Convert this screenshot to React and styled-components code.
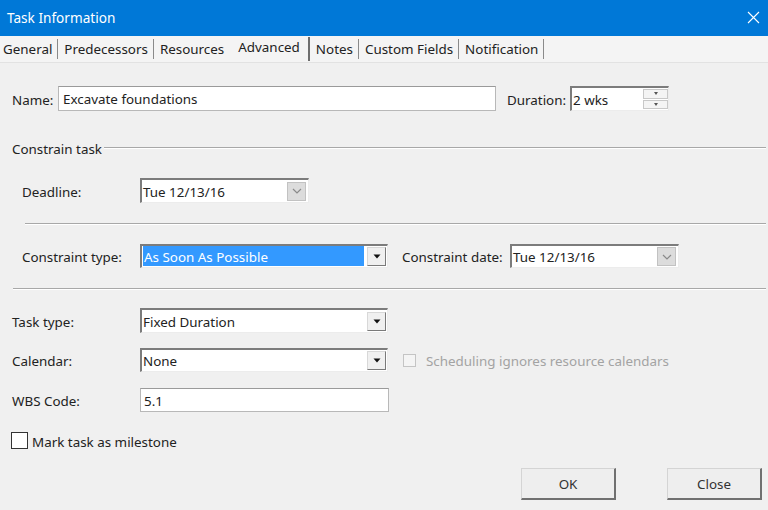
import styled, { createGlobalStyle } from "styled-components";

const GlobalStyle = createGlobalStyle`
    html, body {
        margin: 0;
        padding: 0;
        background: #f0f0f0;
    }
    body {
        font-family: "Noto Sans", "Open Sans", sans-serif;
        font-size: 13.4px;
        color: #222;
    }
`

const Window = styled.div`
    width: 768px;
    height: 510px;
    background: #f0f0f0;
    display: flex;
    flex-direction: column;
    overflow: hidden;
`

const TitleBar = styled.div`
    height: 36px;
    flex-shrink: 0;
    box-sizing: border-box;
    background: #0078d7;
    color: #fff;
    font-size: 13.6px;
    display: flex;
    align-items: center;
    justify-content: space-between;
    padding: 0 8px 2px 7px;
`

const TabStrip = styled.div`
    height: 27px;
    flex-shrink: 0;
    box-sizing: border-box;
    display: flex;
    align-items: center;
    background: #f4f4f4;
    border-bottom: 1px solid #e2e2e2;
`

const Tab = styled.div`
    height: 20px;
    line-height: 20px;
    padding: ${p => p.$active ? "0 8px 4px 6px" : "0 5px 0 6px"};
    margin-left: ${p => p.$active ? "3px" : "0"};
    border-right: ${p => p.$sep}px solid ${p => p.$sep > 1 ? "#6e6e6e" : "#8a8a8a"};
    white-space: nowrap;
    &:first-child {
        padding-left: 3px;
    }
`

const Body = styled.div`
    flex: 1;
    display: flex;
    flex-direction: column;
    padding: 0 2px 0 12px;
`

const Row = styled.div`
    display: flex;
    align-items: center;
    height: ${p => p.$h}px;
    margin-top: ${p => p.$mt}px;
    padding-left: ${p => p.$indent || 0}px;
`

const Label = styled.div`
    width: ${p => p.$w ? `${p.$w}px` : "auto"};
    margin-left: ${p => p.$ml || 0}px;
    padding-top: 2px;
    flex-shrink: 0;
    white-space: nowrap;
    color: ${p => p.$disabled ? "#a3a3a3" : "#222"};
`

const TextBox = styled.div`
    width: ${p => p.$w}px;
    height: 100%;
    box-sizing: border-box;
    background: #fff;
    border: 1px solid #b8b8b8;
    border-top-color: #9a9a9a;
    padding: 1px 0 0 ${p => p.$pad ?? 4}px;
    display: flex;
    align-items: center;
`

const InsetBox = styled.div`
    width: ${p => p.$w}px;
    height: 100%;
    box-sizing: border-box;
    background: #fff;
    border-top: 2px solid #7c7c7c;
    border-left: 2px solid #7c7c7c;
    border-right: 1px solid #ececec;
    border-bottom: 1px solid #ececec;
    display: flex;
    align-items: center;
    margin-left: ${p => p.$ml || 0}px;
`

const BoxText = styled.span`
    flex: 1;
    padding: 1px 0 0 1px;
    white-space: nowrap;
`

const Selected = styled.span`
    flex: 1;
    align-self: stretch;
    display: flex;
    align-items: center;
    margin: 0 3px 1px 1px;
    padding: 1px 0 0 1px;
    background: #3399ff;
    color: #fff;
`

const Spin = styled.div`
    width: 25px;
    height: 100%;
    display: flex;
    flex-direction: column;
    gap: 1px;
    padding: 1px 0;
    box-sizing: border-box;
`

const SpinBtn = styled.div`
    flex: 1;
    background: #f4f4f4;
    border: 1px solid #c8c8c8;
    display: flex;
    align-items: center;
    justify-content: center;
`

const DropBtn = styled.div`
    width: 19px;
    height: 19px;
    box-sizing: border-box;
    margin-right: 1px;
    background: #f0f0f0;
    border: 1px solid #7a7a7a;
    border-top-color: #d8d8d8;
    border-left-color: #d8d8d8;
    display: flex;
    align-items: center;
    justify-content: center;
`

const DateBtn = styled.div`
    width: 19px;
    height: 19px;
    box-sizing: border-box;
    margin-right: 2px;
    background: #dcdcdc;
    border: 1px solid #c2c2c2;
    display: flex;
    align-items: center;
    justify-content: center;
`

const GroupHead = styled.div`
    display: flex;
    align-items: center;
    height: 16px;
    margin-top: 29px;
`

const Etch = styled.div`
    flex: ${p => p.$flex ? 1 : "none"};
    height: 0;
    border-top: 1px solid #a8a8a8;
    border-bottom: 1px solid #fff;
    margin-top: ${p => p.$mt || 0}px;
    margin-left: ${p => p.$ml || 0}px;
`

const CheckBox = styled.div`
    width: ${p => p.$size}px;
    height: ${p => p.$size}px;
    box-sizing: border-box;
    flex-shrink: 0;
    background: ${p => p.$disabled ? "#f4f4f4" : "#fff"};
    border: 1px solid ${p => p.$disabled ? "#c4c4c4" : "#333"};
    margin: 0 ${p => p.$gap}px 0 ${p => p.$ml || 0}px;
`

const ButtonRow = styled.div`
    display: flex;
    justify-content: flex-end;
    gap: 51px;
    margin: 19px 4px 0 0;
`

const Button = styled.div`
    width: 95px;
    height: 32px;
    box-sizing: border-box;
    background: #eeeeee;
    border: 1px solid #d4d4d4;
    border-right: 2px solid #707070;
    border-bottom: 2px solid #707070;
    display: flex;
    align-items: center;
    justify-content: center;
    padding-top: 1px;
    color: #333;
`

const Triangle = () => (
    <svg width="8" height="5" viewBox="0 0 8 5"><path d="M0.5 0.5h7L4 4.5z" fill="#111" /></svg>
)

const Chevron = () => (
    <svg width="10" height="6" viewBox="0 0 10 6"><path d="M1 1l4 4 4-4" fill="none" stroke="#8a8a8a" strokeWidth="1.2" /></svg>
)

const Dot = () => (
    <svg width="4" height="3" viewBox="0 0 4 3"><path d="M0 0h4L2 3z" fill="#555" /></svg>
)

const Select = ({ w, value, selected }) => (
    <InsetBox $w={w}>
        {selected ? <Selected>{value}</Selected> : <BoxText>{value}</BoxText>}
        <DropBtn><Triangle /></DropBtn>
    </InsetBox>
)

const DateInput = ({ value, ml }) => (
    <InsetBox $w={169} $ml={ml}>
        <BoxText>{value}</BoxText>
        <DateBtn><Chevron /></DateBtn>
    </InsetBox>
)

const tabs = [
    { label: "General", sep: 1 },
    { label: "Predecessors", sep: 1 },
    { label: "Resources", sep: 0 },
    { label: "Advanced", sep: 2, active: true },
    { label: "Notes", sep: 1 },
    { label: "Custom Fields", sep: 1 },
    { label: "Notification", sep: 1 },
]

const App = () => {
    return (
        <>
            <GlobalStyle />
            <Window>
                <TitleBar>
                    <span>Task Information</span>
                    <svg width="13" height="13" viewBox="0 0 13 13">
                        <path d="M1 1l11 11M12 1L1 12" stroke="#fff" strokeWidth="1.1" />
                    </svg>
                </TitleBar>
                <TabStrip>
                    {tabs.map((t, i) => <Tab key={i} $sep={t.sep} $active={t.active}>{t.label}</Tab>)}
                </TabStrip>
                <Body>
                    <Row $h={25} $mt={23}>
                        <Label $w={46}>Name:</Label>
                        <TextBox $w={438}>Excavate foundations</TextBox>
                        <Label $w={63} $ml={11}>Duration:</Label>
                        <InsetBox $w={99}>
                            <BoxText>2 wks</BoxText>
                            <Spin>
                                <SpinBtn><Dot /></SpinBtn>
                                <SpinBtn><Dot /></SpinBtn>
                            </Spin>
                        </InsetBox>
                    </Row>

                    <GroupHead>
                        <Label>Constrain task</Label>
                        <Etch $flex $ml={2} />
                    </GroupHead>

                    <Row $h={25} $mt={22} $indent={10}>
                        <Label $w={118}>Deadline:</Label>
                        <DateInput value="Tue 12/13/16" />
                    </Row>

                    <Etch $mt={20} $ml={13} />

                    <Row $h={24} $mt={19} $indent={10}>
                        <Label $w={118}>Constraint type:</Label>
                        <Select w={248} value="As Soon As Possible" selected />
                        <Label $w={108} $ml={14}>Constraint date:</Label>
                        <DateInput value="Tue 12/13/16" />
                    </Row>

                    <Etch $mt={20} $ml={1} />

                    <Row $h={25} $mt={18}>
                        <Label $w={128}>Task type:</Label>
                        <Select w={248} value="Fixed Duration" />
                    </Row>

                    <Row $h={24} $mt={15}>
                        <Label $w={128}>Calendar:</Label>
                        <Select w={248} value="None" />
                        <CheckBox $size={13} $disabled $ml={15} $gap={10} />
                        <Label $disabled>Scheduling ignores resource calendars</Label>
                    </Row>

                    <Row $h={24} $mt={16}>
                        <Label $w={128}>WBS Code:</Label>
                        <TextBox $w={249} $pad={3}>5.1</TextBox>
                    </Row>

                    <Row $h={17} $mt={20}>
                        <CheckBox $size={17} $ml={-1} $gap={4} />
                        <Label>Mark task as milestone</Label>
                    </Row>

                    <ButtonRow>
                        <Button>OK</Button>
                        <Button>Close</Button>
                    </ButtonRow>
                </Body>
            </Window>
        </>
    )
}

export default App;
